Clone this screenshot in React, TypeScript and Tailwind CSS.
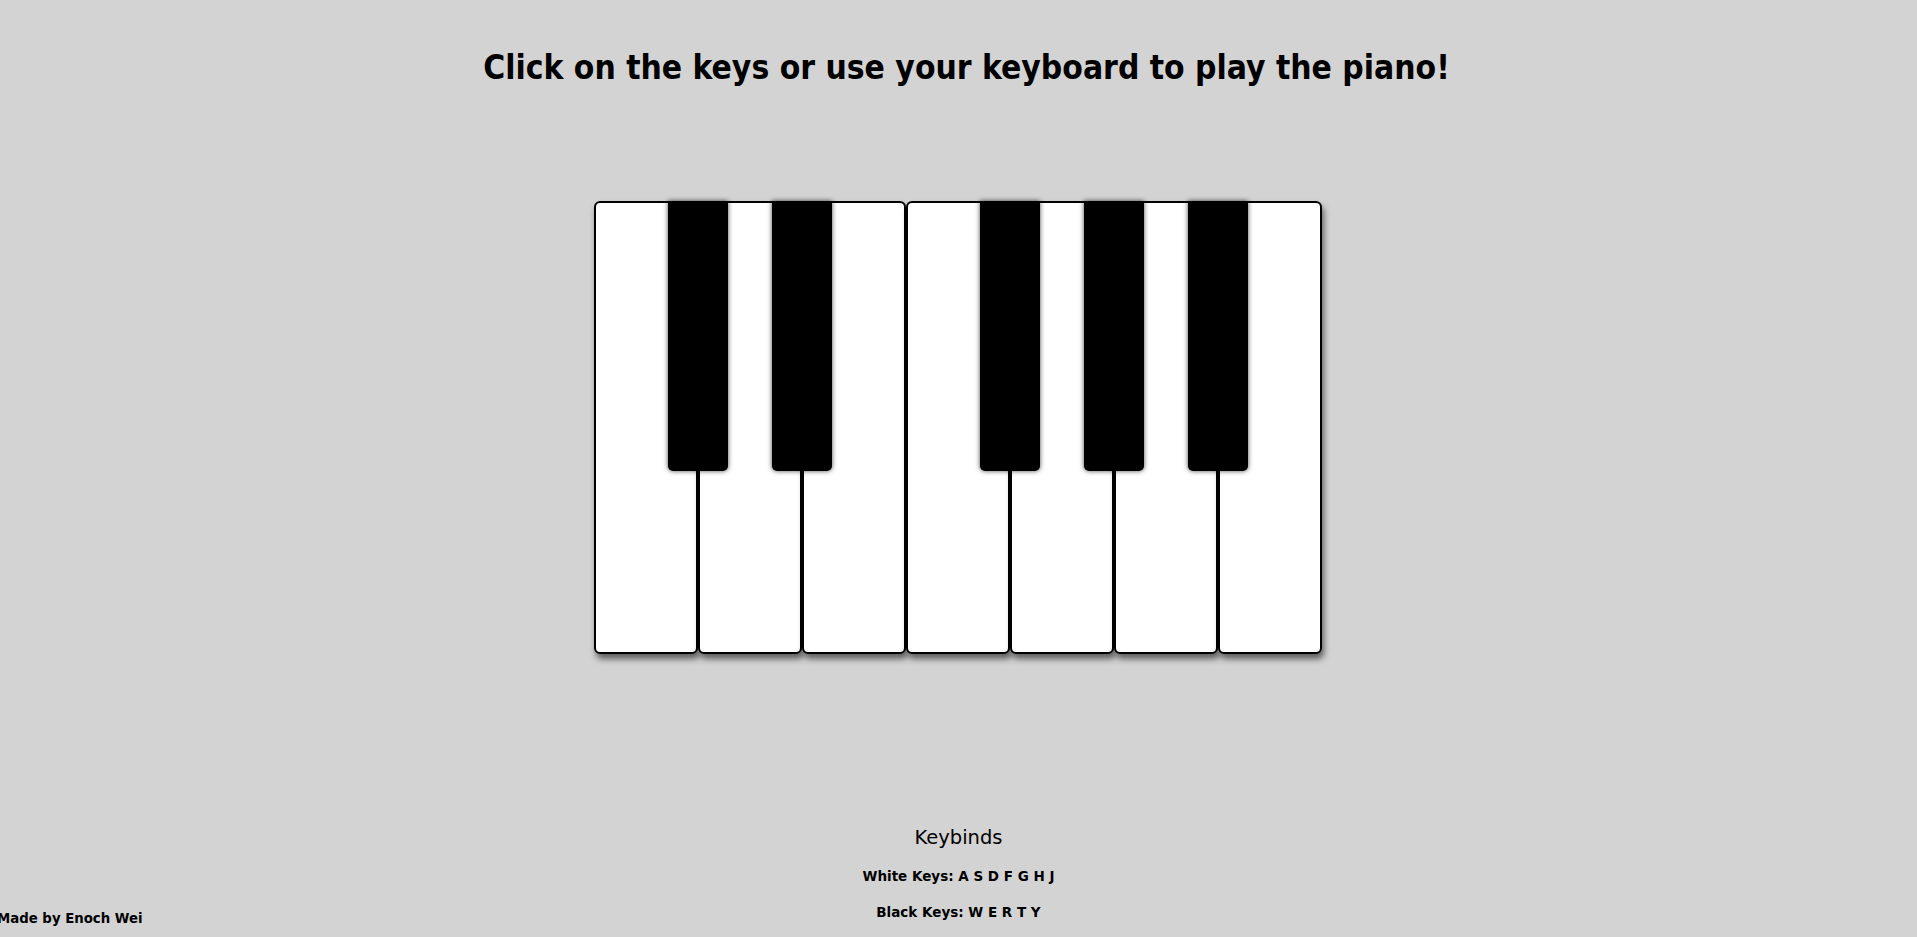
const whiteKeys = ["C", "D", "E", "F", "G", "A", "B"];

// black keys sit on the boundary after these white keys (index of white key to the left)
const blackKeys = [
  { note: "C#", after: 1 },
  { note: "D#", after: 2 },
  { note: "F#", after: 4 },
  { note: "G#", after: 5 },
  { note: "A#", after: 6 },
];

const KEY_W = 104;
const BLACK_W = 60;

function Piano() {
  return (
    <div className="relative mx-auto mt-[113px] flex -translate-x-px">
      {whiteKeys.map((note) => (
        <button
          key={note}
          type="button"
          aria-label={note}
          className="h-[453px] w-[104px] rounded-[6px] border-2 border-black bg-white shadow-[2px_5px_6px_rgba(0,0,0,0.55)]"
        />
      ))}
      {blackKeys.map((k) => (
        <button
          key={k.note}
          type="button"
          aria-label={k.note}
          className="absolute top-0 h-[270px] w-[60px] rounded-b-[5px] bg-black shadow-[0_0_5px_rgba(0,0,0,0.7)]"
          style={{ left: k.after * KEY_W - BLACK_W / 2 }}
        />
      ))}
    </div>
  );
}

export default function App() {
  return (
    <div className="flex h-[937px] flex-col overflow-hidden bg-[#d3d3d3] font-['DejaVu_Sans',sans-serif] text-black">
      <h1 className="mt-[48px] pl-[16px] text-center font-['DejaVu_Sans_Condensed','DejaVu_Sans',sans-serif] text-[33.3px] font-bold leading-[40px]">
        Click on the keys or use your keyboard to play the piano!
      </h1>

      <Piano />

      <div className="mt-[172px] grid grid-cols-[1fr_auto_1fr] items-end">
        <p className="-ml-[3px] text-[13.3px] font-bold leading-[16px]">Made by Enoch Wei</p>
        <div className="pb-[7px] text-center">
          <h3 className="text-[19.5px] leading-[24px]">Keybinds</h3>
          <p className="mt-[18px] text-[13.5px] font-bold leading-[16px]">
            White Keys: A S D F G H J
          </p>
          <p className="mt-[20px] text-[13.5px] font-bold leading-[16px]">
            Black Keys: W E R T Y
          </p>
        </div>
        <div />
      </div>
    </div>
  );
}
